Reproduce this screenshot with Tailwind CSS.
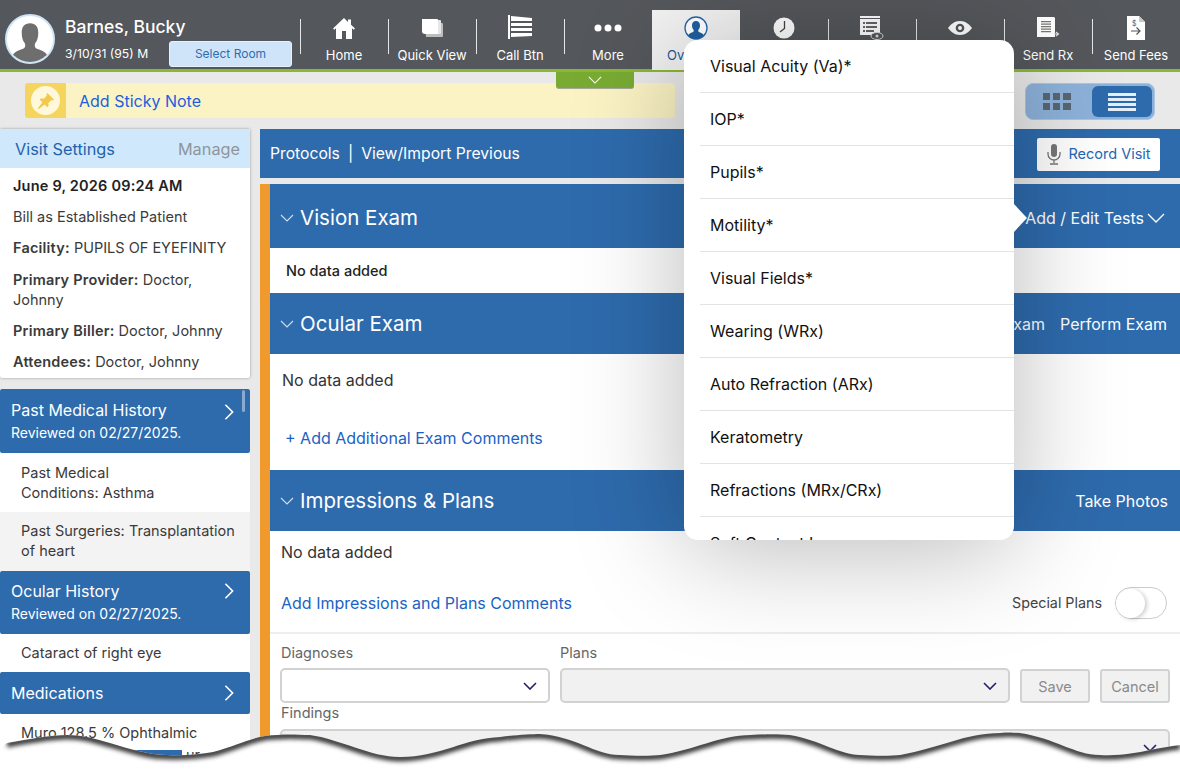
<!DOCTYPE html>
<html lang="en">
<head>
    <meta charset="UTF-8">
    <title>Visit - Barnes, Bucky</title>
    <script src="https://cdn.jsdelivr.net/npm/@tailwindcss/browser@4"></script>
</head>
<body class="font-['Inter','Liberation_Sans',sans-serif] bg-white">
<div class="relative w-[1180px] h-[770px] overflow-hidden bg-[#e9e9e9] text-[#333]">

    <!-- Top bar -->
    <header class="flex h-[72px] bg-[#54575b] border-b-[3px] border-[#8ab833]">
        <div class="w-[300px] shrink-0 flex">
            <div class="ml-[5px] mt-[14px] w-[50px] h-[50px] rounded-full bg-white border-2 border-[#cfe4f5] overflow-hidden shrink-0">
                <svg viewBox="0 0 50 50" class="w-full h-full"><path fill="#6e6e6e" d="M25 8c-6 0-9 4-9 10 0 5 1 9 3.500 12 .5 2 .5 4-1 5-4 2-11 3-13 9v6h39v-6c-2-6-9-7-13-9-1.500-1-1.500-3-1-5 2.500-3 3.500-7 3.500-12 0-6-3-10-9-10z"/></svg>
            </div>
            <div class="ml-[10px] relative flex-1">
                <div class="mt-[15px] text-[17.500px] leading-6 font-medium text-white">Barnes, Bucky</div>
                <div class="mt-[5px] text-[12.200px] leading-5 text-white">3/10/31 (95) M</div>
                <button class="absolute left-[104px] top-[41px] w-[123px] h-[26px] bg-[#cfe4f9] border border-[#e6f1fb] rounded-[3px] text-[12px] text-[#2f6db0]">Select Room</button>
            </div>
        </div>
        <nav class="flex flex-1">
            <a class="relative w-[88px] flex flex-col items-center text-white text-[13px]">
                <span class="absolute left-0 top-[19px] h-[35px] w-[1px] bg-white/85"></span>
                <svg viewBox="0 0 24 24" class="w-[24px] h-[24px] mt-[16px]"><path fill="#fff" d="M12 2 1 12.500l1.200 1.300L4 12.200V23h6v-8h4v8h6V12.200l1.800 1.600 1.200-1.300L19 8.700V3.500h-3v2.400z"/></svg>
                <span class="mt-[7px] leading-4">Home</span>
            </a>
            <a class="relative w-[88px] flex flex-col items-center text-white text-[13px]">
                <span class="absolute left-0 top-[19px] h-[35px] w-[1px] bg-white/85"></span>
                <svg viewBox="0 0 24 24" class="w-[24px] h-[24px] mt-[16px]"><path fill="#bdbdbd" d="M5 7h17a1 1 0 0 1 1 1v12a1 1 0 0 1-1 1H6z"/><path fill="#e6e6e6" d="M3 4h17a1 1 0 0 1 1 1v12a1 1 0 0 1-1 1H6z"/><path fill="#fff" d="M2 3h15a1 1 0 0 1 1 1v13a1 1 0 0 1-1 1H5a3 3 0 0 1-3-3z"/></svg>
                <span class="mt-[7px] leading-4">Quick View</span>
            </a>
            <a class="relative w-[88px] flex flex-col items-center text-white text-[13px]">
                <span class="absolute left-0 top-[19px] h-[35px] w-[1px] bg-white/85"></span>
                <svg viewBox="0 0 26 26" class="w-[26px] h-[26px] mt-[14px]"><path fill="#fff" d="M1 1h2v24H1zM4 2l21 2v3H4zM4 9h21v3H4zM4 14h21v3H4zM4 19h21v3l-21 1z"/></svg>
                <span class="mt-[7px] leading-4">Call Btn</span>
            </a>
            <a class="relative w-[88px] flex flex-col items-center text-white text-[13px]">
                <span class="absolute left-0 top-[19px] h-[35px] w-[1px] bg-white/85"></span>
                <svg viewBox="0 0 28 24" class="w-[28px] h-[24px] mt-[16px]"><circle cx="4" cy="12" r="3.500" fill="#fff"/><circle cx="14" cy="12" r="3.500" fill="#fff"/><circle cx="24" cy="12" r="3.500" fill="#fff"/></svg>
                <span class="mt-[7px] leading-4">More</span>
            </a>
            <a class="relative w-[88px] mt-[10px] h-[60px] flex flex-col items-center bg-[#f2f2f2] text-[#21589b] text-[13px]">
                <svg viewBox="0 0 24 24" class="w-[24px] h-[24px] mt-[6px]"><circle cx="12" cy="12" r="11" fill="#fff" stroke="#2466a8" stroke-width="1.300"/><path fill="#1f5f9f" d="M12 5c-2.500 0-4 1.800-4 4.300 0 2 .6 3.500 1.700 4.700.2.800 0 1.500-.6 1.900-1.600.9-4 1.300-5.100 3.300a10.500 10.500 0 0 0 16 0c-1.100-2-3.500-2.400-5.100-3.300-.6-.4-.8-1.100-.6-1.900 1.100-1.200 1.700-2.700 1.700-4.700C16 6.800 14.500 5 12 5z"/></svg>
                <span class="mt-[7px] leading-4">Overview</span>
            </a>
            <a class="relative w-[88px] flex flex-col items-center">
                <svg viewBox="0 0 22 22" class="w-[22px] h-[22px] mt-[17px]"><circle cx="11" cy="11" r="10.500" fill="#fff"/><path d="M11.500 4v7.500L7 15" fill="none" stroke="#444" stroke-width="1.300"/></svg>
            </a>
            <a class="relative w-[88px] flex flex-col items-center">
                <span class="absolute left-0 top-[19px] h-[35px] w-[1px] bg-white/85"></span>
                <svg viewBox="0 0 26 26" class="w-[26px] h-[26px] mt-[15px]"><path fill="#fff" d="M1 1h20v2H1z"/><path fill="#fff" d="M1 4h20v16H1z"/><path fill="#666" d="M4 7h2v2H4zM7 7h11v2H7zM4 11h2v2H4zM7 11h11v2H7zM4 15h2v2H4zM7 15h8v2H7z"/><ellipse cx="18" cy="21" rx="6" ry="3.500" fill="#54575b" stroke="#ddd"/><circle cx="18" cy="21" r="1.500" fill="#ddd"/></svg>
            </a>
            <a class="relative w-[88px] flex flex-col items-center">
                <span class="absolute left-0 top-[19px] h-[35px] w-[1px] bg-white/85"></span>
                <svg viewBox="0 0 24 14" class="w-[24px] h-[14px] mt-[21px]"><path fill="#fff" d="M12 0C6.500 0 2.500 3.500 0 7c2.500 3.500 6.500 7 12 7s9.500-3.500 12-7c-2.500-3.500-6.500-7-12-7z"/><circle cx="12" cy="7" r="4.300" fill="#54575b"/><circle cx="12" cy="7" r="2" fill="#fff"/></svg>
            </a>
            <a class="relative w-[88px] flex flex-col items-center text-white text-[13px]">
                <span class="absolute left-0 top-[19px] h-[35px] w-[1px] bg-white/85"></span>
                <svg viewBox="0 0 26 26" class="w-[26px] h-[26px] mt-[15px]"><path fill="#fff" d="M2 2h17l1 1v19H2z"/><path fill="#777" d="M6 6h10v1.200H6zM6 8.500h10v1.200H6zM6 11h10v1.200H6zM6 13.500h10v1.200H6zM6 16h10v1.200H6z"/><path d="M19 19h4m-2-2 2.500 2-2.500 2" fill="none" stroke="#ddd" stroke-width="1.200"/></svg>
                <span class="mt-[6px] leading-4">Send Rx</span>
            </a>
            <a class="relative w-[88px] flex flex-col items-center text-white text-[13px]">
                <span class="absolute left-0 top-[19px] h-[35px] w-[1px] bg-white/85"></span>
                <svg viewBox="0 0 22 26" class="w-[22px] h-[26px] mt-[15px]"><path fill="#fff" d="M2 1h12l6 6v18H2z"/><path fill="#c9c9c9" d="M14 1l6 6h-6z"/><path d="M6 16h9m-3.500-3.500L15 16l-3.500 3.500" fill="none" stroke="#555" stroke-width="1.200"/><text x="7" y="11" font-size="7" fill="#555">$</text></svg>
                <span class="mt-[6px] leading-4">Send Fees</span>
            </a>
        </nav>
    </header>

    <!-- Collapse handle under the bar -->
    <div class="absolute left-[556px] top-[72px] w-[78px] h-[17px] bg-[#79ab33] rounded-b-[3px] border-b border-[#a8a89a] z-10 flex justify-center items-start">
        <svg viewBox="0 0 16 9" class="w-[14px] h-[8px] mt-[4px]"><path d="M1 1l7 7 7-7" fill="none" stroke="#fff" stroke-width="1.300"/></svg>
    </div>

    <!-- Sticky note row -->
    <div class="flex items-start h-[57px] pt-[11px] pl-[25px]">
        <div class="w-[650px] h-[35px] flex items-center bg-[#fbf3c4] rounded-[3px] overflow-hidden">
            <div class="w-[41px] h-[35px] bg-[#f5d55e] flex items-center justify-center">
                <div class="w-[29px] h-[29px] rounded-full bg-[#fff8dc] flex items-center justify-center">
                    <svg viewBox="0 0 20 20" class="w-[18px] h-[18px]"><path fill="#f2c94c" d="M11.500 1 19 8.500l-1.500 1-1.500-.5-3.500 3.500.5 3-1.500 1.500-3-3L2 19l-1-1 5-6.500-3-3L4.500 7l3 .5L11 4l-.5-1.500z"/></svg>
                </div>
            </div>
            <span class="ml-[13px] mt-[1px] text-[16px] text-[#1a5fe0]">Add Sticky Note</span>
        </div>
        <div class="ml-[350px] w-[130px] h-[37px] rounded-[8px] bg-[#8db2da] border border-[#a9c6e4] flex p-[2px]">
            <div class="w-[64px] pr-[7px] flex items-center justify-center">
                <svg viewBox="0 0 28 18" class="w-[28px] h-[18px]"><path fill="#5b6672" d="M0 0h7v7H0zM10 0h7v7h-7zM20 0h8v7h-8zM0 10h7v7H0zM10 10h7v7h-7zM20 10h8v7h-8z"/></svg>
            </div>
            <div class="flex-1 bg-[#2e6bad] rounded-[6px] flex items-center justify-center">
                <svg viewBox="0 0 28 18" class="w-[28px] h-[18px]"><path fill="#e6eef7" d="M0 0h28v3H0zM0 5h28v3H0zM0 10h28v3H0zM0 15h28v3H0z"/></svg>
            </div>
        </div>
    </div>

    <!-- Main -->
    <div class="flex gap-[10px]">
        <!-- Left column -->
        <aside class="w-[250px] shrink-0">
            <section class="h-[249px] bg-white rounded-[2px] shadow-[0_0_3px_rgba(0,0,0,0.35)]">
                <div class="h-[39px] pt-[1px] bg-[#cfe8fb] flex items-center justify-between pl-[15px] pr-[10px] text-[16.300px]">
                    <span class="text-[#1f62ad]">Visit Settings</span>
                    <span class="text-[#8f959b]">Manage</span>
                </div>
                <div class="pt-[8px] px-[13px] text-[14.500px] leading-[20.500px] space-y-[10.700px] text-[#3a3a3a]">
                    <p class="font-semibold tracking-[0.2px] text-[#222]">June 9, 2026 09:24 AM</p>
                    <p>Bill as Established Patient</p>
                    <p><b class="font-semibold tracking-[0.2px]">Facility:</b> PUPILS OF EYEFINITY</p>
                    <p><b class="font-semibold tracking-[0.2px]">Primary Provider:</b> Doctor, Johnny</p>
                    <p><b class="font-semibold tracking-[0.2px]">Primary Biller:</b> Doctor, Johnny</p>
                    <p><b class="font-semibold tracking-[0.2px]">Attendees:</b> Doctor, Johnny</p>
                </div>
            </section>
            <div class="relative mt-[11px] bg-white">
                <span class="absolute right-[5px] top-[1px] w-[3px] h-[22px] rounded bg-[#8aa9cc]"></span>
                <div class="h-[64px] bg-[#2e6bad] rounded-[2px] flex items-center justify-between pl-[11px] pr-[15px] text-white">
                    <div>
                        <div class="text-[16px] leading-6 -mt-[1px]">Past Medical History</div>
                        <div class="text-[14px] leading-5 mt-[1px]">Reviewed on 02/27/2025.</div>
                    </div>
                    <svg viewBox="0 0 12 20" class="w-[12px] h-[18px] -mt-[18px]"><path d="M2 2l8 8-8 8" fill="none" stroke="#fff" stroke-width="1.800"/></svg>
                </div>
                <div class="h-[59px] pl-[21px] pr-[10px] pt-[10px] text-[14.500px] leading-5 text-[#3a3a3a]">Past Medical<br>Conditions: Asthma</div>
                <div class="h-[59px] bg-[#f3f3f3] pl-[21px] pr-[10px] pt-[9px] text-[14.500px] leading-5 text-[#3a3a3a]">Past Surgeries: Transplantation of heart</div>
                <div class="h-[63px] bg-[#2e6bad] rounded-[2px] flex items-center justify-between pl-[11px] pr-[15px] text-white">
                    <div>
                        <div class="text-[16px] leading-6 -mt-[2px]">Ocular History</div>
                        <div class="text-[14px] leading-5 mt-[1px]">Reviewed on 02/27/2025.</div>
                    </div>
                    <svg viewBox="0 0 12 20" class="w-[12px] h-[18px] -mt-[24px]"><path d="M2 2l8 8-8 8" fill="none" stroke="#fff" stroke-width="1.800"/></svg>
                </div>
                <div class="h-[38px] pl-[21px] flex items-center text-[14.500px] text-[#3a3a3a]">Cataract of right eye</div>
                <div class="h-[42px] bg-[#2e6bad] rounded-[2px] flex items-center justify-between pl-[11px] pr-[15px] text-white">
                    <span class="text-[16px]">Medications</span>
                    <svg viewBox="0 0 12 20" class="w-[12px] h-[18px]"><path d="M2 2l8 8-8 8" fill="none" stroke="#fff" stroke-width="1.800"/></svg>
                </div>
                <div class="pl-[21px] pr-[10px] pt-[8px] text-[14.500px] leading-[22px] text-[#3a3a3a] h-[70px]">
                    Muro 128.5 % Ophthalmic<br>
                    <span class="inline-block w-[112px]"></span><span class="inline-block w-[49px] h-[12px] bg-[#2e6bad] align-middle"></span><span class="ml-[4px]">ur times</span>
                </div>
            </div>
        </aside>

        <!-- Right column -->
        <main class="flex-1 min-w-0">
            <div class="h-[49px] pt-[1px] bg-[#2e6bad] flex items-center justify-between pl-[10px] pr-[20px] text-white text-[15.700px]">
                <span>Protocols<span class="mx-[8px]">|</span>View/Import Previous</span>
                <button class="w-[123px] h-[33px] bg-white rounded-[2px] flex items-center justify-center gap-[6px] text-[#2566b4] text-[14.500px]">
                    <svg viewBox="0 0 16 22" class="w-[16px] h-[22px]"><rect x="5" y="1" width="6" height="13" rx="3" fill="#777"/><path d="M2 9v2a6 6 0 0 0 12 0V9M8 17v3M4 21h8" fill="none" stroke="#777" stroke-width="1.300"/></svg>
                    Record Visit
                </button>
            </div>
            <div class="mt-[6px] flex">
                <div class="w-[10px] shrink-0 bg-[#f09a2e]"></div>
                <div class="flex-1 min-w-0 bg-white">
                    <div class="h-[64px] pt-[4px] bg-[#2e6bad] flex items-center pl-[10px] pr-[15px] text-white">
                        <svg viewBox="0 0 14 8" class="w-[14px] h-[8px]"><path d="M1 1l6 6 6-6" fill="none" stroke="#cfe0f2" stroke-width="1.100"/></svg>
                        <h2 class="ml-[6px] text-[20.500px]">Vision Exam</h2>
                        <span class="ml-auto text-[16px]">Add / Edit Tests</span>
                        <svg viewBox="0 0 18 11" class="ml-[3px] w-[18px] h-[11px]"><path d="M1 1l8 8 8-8" fill="none" stroke="#fff" stroke-width="1.300"/></svg>
                    </div>
                    <div class="h-[45px] pl-[16px] flex items-center text-[14.500px] font-medium text-[#222]">No data added</div>
                    <div class="h-[61px] bg-[#2e6bad] flex items-center pl-[10px] pr-[13px] text-white">
                        <svg viewBox="0 0 14 8" class="w-[14px] h-[8px]"><path d="M1 1l6 6 6-6" fill="none" stroke="#cfe0f2" stroke-width="1.100"/></svg>
                        <h2 class="ml-[6px] mt-[2px] text-[20.500px]">Ocular Exam</h2>
                        <span class="ml-auto text-[16px]">Copy Last Exam</span>
                        <span class="ml-[15px] text-[16px]">Perform Exam</span>
                    </div>
                    <div class="h-[116px] pl-[12px] pt-[16px] text-[16px] text-[#333]">
                        <p class="leading-5">No data added</p>
                        <a class="block mt-[38px] ml-[3px] leading-5 text-[16px] text-[#1a62c4]">+ Add Additional Exam Comments</a>
                    </div>
                    <div class="h-[61px] bg-[#2e6bad] flex items-center pl-[10px] pr-[12px] text-white">
                        <svg viewBox="0 0 14 8" class="w-[14px] h-[8px]"><path d="M1 1l6 6 6-6" fill="none" stroke="#cfe0f2" stroke-width="1.100"/></svg>
                        <h2 class="ml-[6px] mt-[2px] text-[20.500px]">Impressions &amp; Plans</h2>
                        <span class="ml-auto text-[16px]">Take Photos</span>
                    </div>
                    <div class="h-[103px] border-b-2 border-[#eeeeee] pl-[11px] pr-[13px] pt-[11px]">
                        <p class="leading-5 text-[16px] text-[#333]">No data added</p>
                        <div class="mt-[25px] flex items-center justify-between">
                            <a class="text-[16px] text-[#1a62c4]">Add Impressions and Plans Comments</a>
                            <div class="flex items-center gap-[13px] text-[14.300px] text-[#444]">
                                Special Plans
                                <span class="w-[52px] h-[32px] rounded-full border border-[#ccc] bg-white shadow-[inset_26px_0_6px_-22px_rgba(0,0,0,0.05)] flex items-center">
                                    <span class="w-[29px] h-[29px] rounded-full bg-white shadow-[2px_1px_4px_rgba(0,0,0,0.2)]"></span>
                                </span>
                            </div>
                        </div>
                    </div>
                    <div class="pl-[10px] pr-[10px] pt-[9px]">
                        <div class="flex gap-[10px] items-end">
                            <div class="w-[270px]">
                                <label class="block pl-[1px] text-[14.500px] leading-5 text-[#666]">Diagnoses</label>
                                <div class="mt-[5px] h-[35px] bg-white border-2 border-[#d2d2d2] rounded-[5px] flex items-center justify-end pr-[11px]">
                                    <svg viewBox="0 0 14 8" class="w-[14px] h-[8px]"><path d="M1 1l6 6 6-6" fill="none" stroke="#2a1a6b" stroke-width="1.600"/></svg>
                                </div>
                            </div>
                            <div class="w-[450px]">
                                <label class="block text-[14.500px] leading-5 text-[#666]">Plans</label>
                                <div class="mt-[5px] h-[35px] bg-[#f1f1f1] border-2 border-[#d2d2d2] rounded-[5px] flex items-center justify-end pr-[11px]">
                                    <svg viewBox="0 0 14 8" class="w-[14px] h-[8px]"><path d="M1 1l6 6 6-6" fill="none" stroke="#2a1a6b" stroke-width="1.600"/></svg>
                                </div>
                            </div>
                            <button class="w-[70px] h-[34px] pt-[1px] bg-[#f1f1f1] border-2 border-[#d2d2d2] rounded-[3px] text-[14.500px] text-[#8a8a8a]">Save</button>
                            <button class="w-[70px] h-[34px] pt-[1px] bg-[#f1f1f1] border-2 border-[#d2d2d2] rounded-[3px] text-[14.500px] text-[#8a8a8a]">Cancel</button>
                        </div>
                        <label class="block pl-[1px] text-[14.500px] leading-5 text-[#666]">Findings</label>
                        <div class="mt-[6px] h-[50px] bg-[#f1f1f1] border-2 border-[#d2d2d2] rounded-[5px] flex items-start justify-end pr-[11px] pt-[13px]">
                            <svg viewBox="0 0 14 8" class="w-[14px] h-[8px]"><path d="M1 1l6 6 6-6" fill="none" stroke="#2a1a6b" stroke-width="1.600"/></svg>
                        </div>
                    </div>
                </div>
            </div>
        </main>
    </div>

    <!-- Popover menu -->
    <div class="absolute left-[684px] top-[40px] w-[330px] h-[500px] z-20 rounded-[14px] bg-white shadow-[0_10px_110px_rgba(0,0,0,0.28)]">
        <svg viewBox="0 0 14 28" class="absolute left-full top-[164px] w-[14px] h-[28px]"><path fill="#fff" d="M0 0l13 14L0 28z"/></svg>
        <ul class="h-full overflow-hidden rounded-[14px] pl-[16px] text-[16px] text-[#111]">
            <li class="h-[53px] pl-[10px] flex items-center border-b border-[#e3e3e3]">Visual Acuity (Va)*</li>
            <li class="h-[53px] pl-[10px] flex items-center border-b border-[#e3e3e3]">IOP*</li>
            <li class="h-[53px] pl-[10px] flex items-center border-b border-[#e3e3e3]">Pupils*</li>
            <li class="h-[53px] pl-[10px] flex items-center border-b border-[#e3e3e3]">Motility*</li>
            <li class="h-[53px] pl-[10px] flex items-center border-b border-[#e3e3e3]">Visual Fields*</li>
            <li class="h-[53px] pl-[10px] flex items-center border-b border-[#e3e3e3]">Wearing (WRx)</li>
            <li class="h-[53px] pl-[10px] flex items-center border-b border-[#e3e3e3]">Auto Refraction (ARx)</li>
            <li class="h-[53px] pl-[10px] flex items-center border-b border-[#e3e3e3]">Keratometry</li>
            <li class="h-[53px] pl-[10px] flex items-center border-b border-[#e3e3e3]">Refractions (MRx/CRx)</li>
            <li class="h-[53px] pl-[10px] flex items-center border-b border-[#e3e3e3]">Soft Contact Lens</li>
        </ul>
    </div>

    <!-- Torn paper edge: white below the wave, soft shadow only on the white side -->
    <svg class="absolute left-0 top-[725px] z-30 w-[1180px] h-[45px]" viewBox="0 725 1180 45">
        <defs>
            <filter id="tear-blur" x="-5%" y="-100%" width="110%" height="300%"><feGaussianBlur stdDeviation="2.200"/></filter>
            <clipPath id="tear-clip"><path d="M0 750 C3 746 5 744 7 743 C30 739 50 735 67 735 C85 735 95 739 110 743 C130 749 150 755 167 755 C185 756 200 754 213 752 C240 745 255 735 277 735 C290 734 300 735 310 735 C340 739 370 757 400 757 C440 757 465 738 500 737 C515 735 530 734 540 734 C575 736 595 755 620 755 C635 756 650 756 660 755 C695 750 720 735 750 735 C765 734 780 734 790 735 C820 740 840 755 860 755 C875 756 890 756 900 755 C940 748 965 733 1000 733 C1010 732 1015 733 1020 733 C1055 738 1075 755 1100 755 C1120 756 1135 753 1150 750 C1160 748 1170 746 1180 745 V770 H0 Z"/></clipPath>
        </defs>
        <path fill="#fff" d="M0 750 C3 746 5 744 7 743 C30 739 50 735 67 735 C85 735 95 739 110 743 C130 749 150 755 167 755 C185 756 200 754 213 752 C240 745 255 735 277 735 C290 734 300 735 310 735 C340 739 370 757 400 757 C440 757 465 738 500 737 C515 735 530 734 540 734 C575 736 595 755 620 755 C635 756 650 756 660 755 C695 750 720 735 750 735 C765 734 780 734 790 735 C820 740 840 755 860 755 C875 756 890 756 900 755 C940 748 965 733 1000 733 C1010 732 1015 733 1020 733 C1055 738 1075 755 1100 755 C1120 756 1135 753 1150 750 C1160 748 1170 746 1180 745 V770 H0 Z"/>
        <g clip-path="url(#tear-clip)">
            <path fill="none" stroke="#3a3a3a" stroke-width="7" filter="url(#tear-blur)" transform="translate(0 1)" d="M7 743 C30 739 50 735 67 735 C85 735 95 739 110 743 C130 749 150 755 167 755 C185 756 200 754 213 752 C240 745 255 735 277 735 C290 734 300 735 310 735 C340 739 370 757 400 757 C440 757 465 738 500 737 C515 735 530 734 540 734 C575 736 595 755 620 755 C635 756 650 756 660 755 C695 750 720 735 750 735 C765 734 780 734 790 735 C820 740 840 755 860 755 C875 756 890 756 900 755 C940 748 965 733 1000 733 C1010 732 1015 733 1020 733 C1055 738 1075 755 1100 755 C1120 756 1135 753 1150 750 C1160 748 1170 746 1180 745"/>
        </g>
    </svg>
</div>
</body>
</html>
